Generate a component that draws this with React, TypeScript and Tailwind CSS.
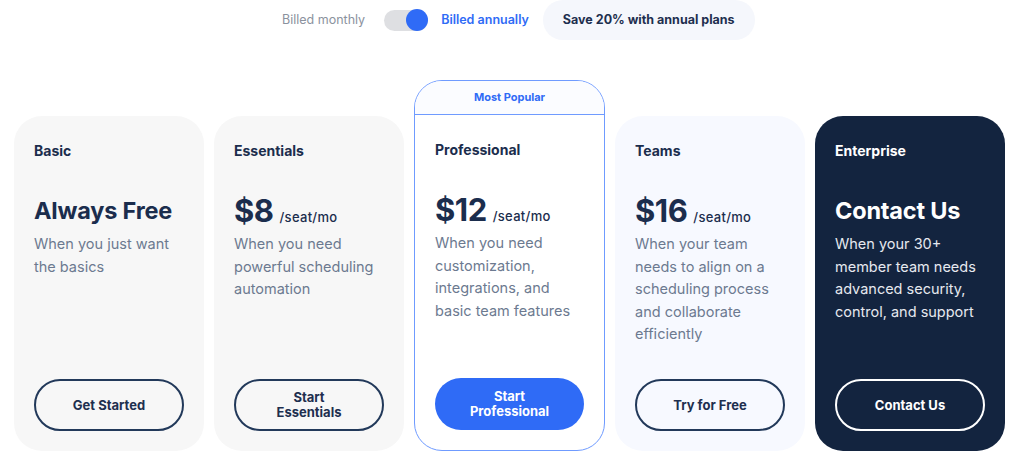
import React from 'react';

interface Plan {
  name: string;
  price?: string;
  priceText?: string;
  desc: string;
  cta: string;
  variant: 'gray' | 'blue' | 'popular' | 'dark';
}

const plans: Plan[] = [
  { name: 'Basic', priceText: 'Always Free', desc: 'When you just want the basics', cta: 'Get Started', variant: 'gray' },
  { name: 'Essentials', price: '$8', desc: 'When you need powerful scheduling automation', cta: 'Start Essentials', variant: 'gray' },
  { name: 'Professional', price: '$12', desc: 'When you need customization, integrations, and basic team features', cta: 'Start Professional', variant: 'popular' },
  { name: 'Teams', price: '$16', desc: 'When your team needs to align on a scheduling process and collaborate efficiently', cta: 'Try for Free', variant: 'blue' },
  { name: 'Enterprise', priceText: 'Contact Us', desc: 'When your 30+ member team needs advanced security, control, and support', cta: 'Contact Us', variant: 'dark' },
];

const CardBody: React.FC<{ plan: Plan }> = ({ plan }) => {
  const dark = plan.variant === 'dark';
  const popular = plan.variant === 'popular';
  return (
    <div className="flex flex-col h-full px-5 pt-[25px] pb-5">
      <div className={`text-[14px] leading-5 font-bold ${dark ? 'text-white' : 'text-[#1b2d4d]'}`}>{plan.name}</div>

      {/* price */}
      <div className="mt-[30px] h-10 flex items-center">
        {plan.price ? (
          <div className="flex items-baseline">
            <span className="text-[31px] font-bold tracking-[-0.5px] text-[#1b2d4d]">{plan.price}</span>
            <span className="ml-[6px] text-[13px] font-medium tracking-[0.3px] text-[#1b2d4d]">/seat/mo</span>
          </div>
        ) : (
          <span className={`text-[23.5px] font-bold tracking-[-0.2px] ${dark ? 'text-white' : 'text-[#1b2d4d]'}`}>{plan.priceText}</span>
        )}
      </div>

      <p className={`mt-[2px] text-[14.5px] leading-[22.5px] ${dark ? 'text-[#e6e9ef]' : 'text-[#6c7a90]'}`}>{plan.desc}</p>

      <div className="mt-auto">
        <button
          className={`w-full h-[52px] rounded-full flex items-center justify-center text-[13px] leading-[15px] font-bold ${
            popular
              ? 'bg-[#2f6bf6] text-white'
              : dark
              ? 'border-2 border-white text-white'
              : 'border-2 border-[#22395a] text-[#1e2f4f]'
          }`}
        >
          <span className="max-w-[90px]">{plan.cta}</span>
        </button>
      </div>
    </div>
  );
};

export default function App() {
  return (
    <div className="w-[1024px] h-[474px] bg-white overflow-hidden font-['Inter',sans-serif]">
      {/* Billing toggle */}
      <div className="h-10 flex items-center pl-[282px]">
        <span className="text-[12.5px] text-[#8b929e]">Billed monthly</span>
        <div className="ml-[19px] w-[44px] h-[21px] rounded-full bg-[#dedfe2] flex items-center justify-end">
          <div className="w-[22px] h-[22px] rounded-full bg-[#2f6bf6]" />
        </div>
        <span className="ml-[13px] text-[12.5px] font-semibold text-[#2f6bf6]">Billed annually</span>
        <div className="ml-[14px] h-10 px-5 rounded-full bg-[#f5f7fc] flex items-center">
          <span className="text-[12.5px] font-bold text-[#1e2f4f]">Save 20% with annual plans</span>
        </div>
      </div>

      {/* Plans */}
      <div className="mt-10 pl-[14px] flex items-end gap-[10px]">
        {plans.map((plan) =>
          plan.variant === 'popular' ? (
            <div key={plan.name} className="w-[191px] h-[371px] rounded-[28px] border border-[#6f9bff] bg-white overflow-hidden flex flex-col">
              <div className="h-[34px] shrink-0 border-b border-[#6f9bff] bg-[#fbfcff] flex items-center justify-center">
                <span className="text-[11px] font-bold text-[#2f6bf6]">Most Popular</span>
              </div>
              <div className="flex-1">
                <CardBody plan={plan} />
              </div>
            </div>
          ) : (
            <div
              key={plan.name}
              className={`w-[190px] h-[335px] rounded-[28px] ${
                plan.variant === 'dark' ? 'bg-[#13243f]' : plan.variant === 'blue' ? 'bg-[#f7f9ff]' : 'bg-[#f7f7f7]'
              }`}
            >
              <CardBody plan={plan} />
            </div>
          )
        )}
      </div>
    </div>
  );
}
